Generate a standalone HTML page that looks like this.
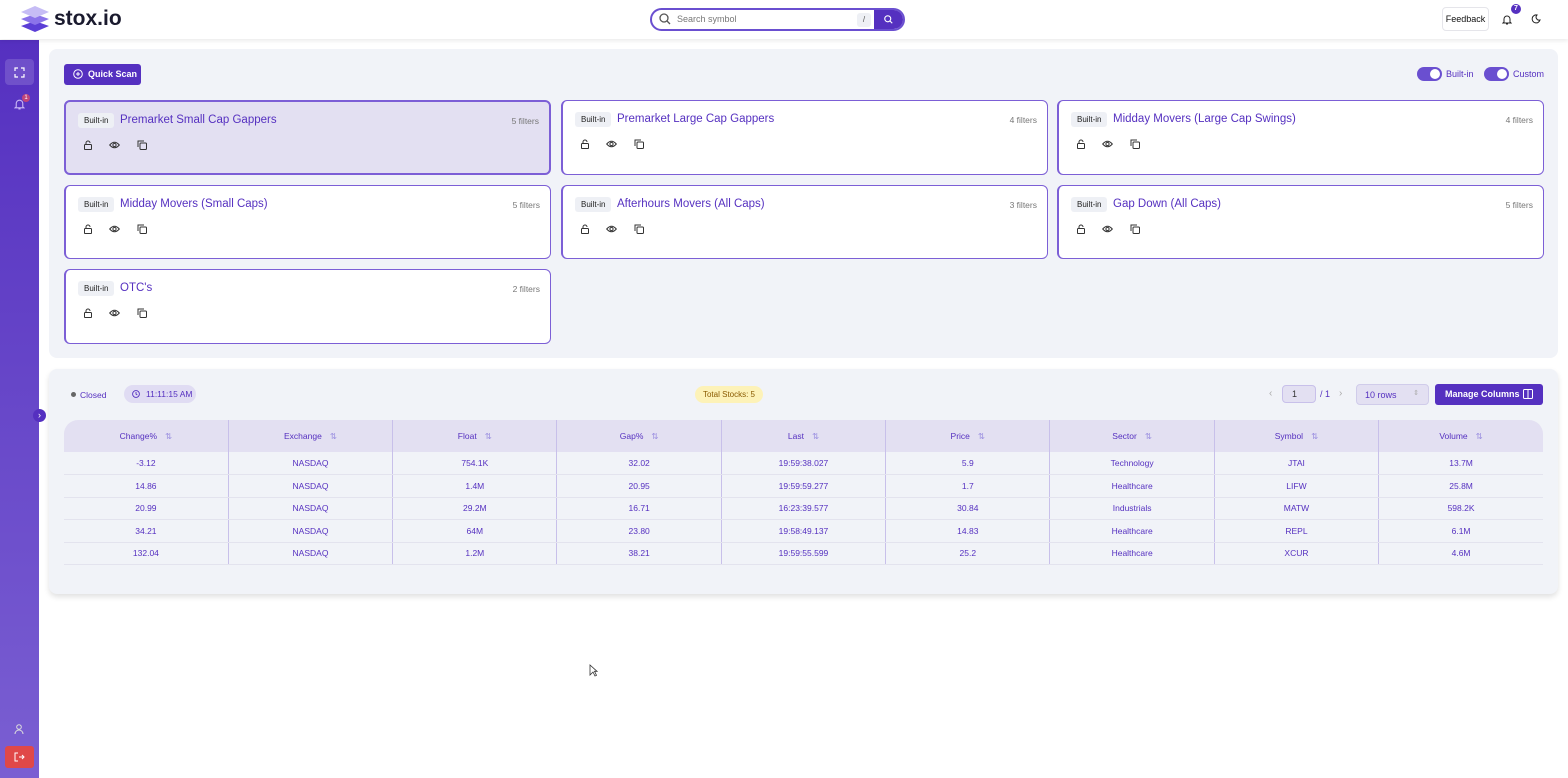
<!DOCTYPE html>
<html><head><meta charset="utf-8"><style>
*{box-sizing:border-box;margin:0;padding:0}
body{width:1568px;height:778px;overflow:hidden;background:#fff;font-family:"Liberation Sans",sans-serif;position:relative}
.top{position:absolute;left:0;top:0;width:1568px;height:39px;background:#fff;box-shadow:0 2px 4px rgba(0,0,0,.08);z-index:2}
.logo{position:absolute;left:20px;top:5px}
.logotext{position:absolute;left:54px;top:7px;font-size:21px;font-weight:bold;color:#1a1a2e}
.search{position:absolute;left:650px;top:8px;width:255px;height:23px;border:2px solid #6a4fd0;border-radius:12px;background:#fff;overflow:hidden}
.search span{position:absolute;left:25px;top:4px;font-size:9px;color:#777}
.search .k{position:absolute;left:205px;top:3px;width:14px;height:14px;background:#eef0f5;border-radius:3px;font-size:8px;color:#555;text-align:center;line-height:14px}
.search .b{position:absolute;right:0;top:0;width:29px;height:19px;background:#5530c0}
.fb{position:absolute;left:1442px;top:7px;width:47px;height:24px;border:1px solid #e5e5ea;border-radius:4px;font-size:9px;text-align:center;line-height:22px;color:#111}
.side{position:absolute;left:0;top:40px;width:39px;height:738px;background:linear-gradient(#5530c0,#7a5fd2)}
.p1{position:absolute;left:49px;top:49px;width:1509px;height:309px;background:#f1f3f8;border-radius:8px}
.p2{position:absolute;left:49px;top:369px;width:1509px;height:225px;background:#f1f3f8;border-radius:8px;box-shadow:0 3px 6px rgba(0,0,0,.12)}
.btn{position:absolute;background:#5530c0;color:#fff;font-size:9px;font-weight:bold;border-radius:3px}
.card{position:absolute;width:487px;height:75px;border:1px solid #7c5fd6;border-left-width:2px;border-radius:6px;background:#fff}
.card.sel{background:#e3e0f2;border-width:2px}
.tag{position:absolute;left:12px;top:11px;background:#eef0f5;font-size:8px;padding:3px 6px;border-radius:3px;color:#222}
.ttl{position:absolute;left:54px;top:12px;font-size:11.5px;color:#5530c0}
.flt{position:absolute;right:10px;top:14px;font-size:8.5px;color:#777}
.ic{position:absolute;top:38px}
.tgl{position:absolute;top:18px;width:25px;height:14px;border-radius:7px;background:#6a4fd0}
.tgl:after{content:"";position:absolute;right:2px;top:2px;width:10px;height:10px;border-radius:5px;background:#fff}
.tl{position:absolute;top:20px;font-size:9px;color:#5530c0}
table{position:absolute;left:64px;top:420px;width:1479px;border-collapse:collapse;font-size:8.5px;color:#5530c0;table-layout:fixed}
th{height:32px;background:#e3e0f2;font-weight:normal;border-right:1px solid #c8c0ea;font-size:8.5px}
th:last-child{border-right:none}
th:first-child{border-top-left-radius:14px}th:last-child{border-top-right-radius:14px}
th i{font-style:normal;color:#9a8ee0;margin-left:8px}
td{height:22.5px;text-align:center;border-right:1px solid #c8c0ea;border-bottom:1px solid #e3e3ee}
td:last-child{border-right:none}
</style></head><body>
<div class="top">
<svg class="logo" width="30" height="28" viewBox="0 0 30 28"><path d="M15 16 L29 21 L15 27 L1 21Z" fill="#5b3ed6"/><path d="M15 9 L29 14 L15 20 L1 14Z" fill="#8b73ea"/><path d="M15 1 L29 7 L15 13 L1 7Z" fill="#c6bcf5"/></svg>
<div class="logotext">stox.io</div>
<div class="search"><svg style="position:absolute;left:7px;top:3px" width="12" height="12" viewBox="0 0 12 12" fill="none" stroke="#555" stroke-width="1.3"><circle cx="5" cy="5" r="4"/><path d="M8 8l3 3"/></svg><span>Search symbol</span><div class="k">/</div><div class="b"><svg style="position:absolute;left:10px;top:5px" width="9" height="9" viewBox="0 0 12 12" fill="none" stroke="#fff" stroke-width="1.5"><circle cx="5" cy="5" r="4"/><path d="M8 8l3 3"/></svg></div></div>
<div class="fb">Feedback</div>
<svg style="position:absolute;left:1502px;top:14px" width="10" height="11" viewBox="0 0 10 11" fill="none" stroke="#222" stroke-width="1"><path d="M2 8V5a3 3 0 0 1 6 0v3l1 1H1z M4 10h2"/></svg>
<div style="position:absolute;left:1511px;top:4px;width:10px;height:10px;border-radius:5px;background:#5530c0;color:#fff;font-size:7px;text-align:center;line-height:10px;font-weight:bold">7</div>
<svg style="position:absolute;left:1531px;top:14px" width="10" height="10" viewBox="0 0 10 10" fill="none" stroke="#222" stroke-width="1"><path d="M6 1a4 4 0 1 0 3 5a3 3 0 0 1-3-5z"/></svg>
</div>
<div class="side">
<div style="position:absolute;left:5px;top:19px;width:29px;height:26px;background:rgba(255,255,255,.15);border-radius:4px"></div>
<svg style="position:absolute;left:14px;top:27px" width="11" height="11" viewBox="0 0 11 11" fill="none" stroke="#fff" stroke-width="1.2"><path d="M1 4V1h3M7 1h3v3M10 7v3H7M4 10H1V7"/></svg>
<svg style="position:absolute;left:14px;top:58px" width="11" height="12" viewBox="0 0 10 11" fill="none" stroke="#c9b8f5" stroke-width="1"><path d="M2 8V5a3 3 0 0 1 6 0v3l1 1H1z M4 10h2"/></svg>
<div style="position:absolute;left:22px;top:54px;width:8px;height:8px;border-radius:4px;background:#c0457a;color:#fff;font-size:6px;text-align:center;line-height:8px">1</div>
<div style="position:absolute;left:33px;top:369px;width:13px;height:13px;border-radius:7px;background:#5530c0;color:#fff;font-size:9px;text-align:center;line-height:12px;z-index:3">›</div>
<svg style="position:absolute;left:14px;top:684px" width="10" height="11" viewBox="0 0 10 11" fill="none" stroke="#ddd" stroke-width="1"><circle cx="5" cy="3" r="2.3"/><path d="M1 10a4 4 0 0 1 8 0"/></svg>
<div style="position:absolute;left:5px;top:706px;width:29px;height:22px;background:#e04848;border-radius:3px"></div>
<svg style="position:absolute;left:14px;top:712px" width="11" height="10" viewBox="0 0 11 10" fill="none" stroke="#fff" stroke-width="1"><path d="M4 1H1v8h3M5 5h5M8 3l2 2-2 2"/></svg>
</div>
<div class="p1">
<div class="btn" style="left:15px;top:15px;width:77px;height:21px"><svg style="position:absolute;left:9px;top:5px" width="10" height="10" viewBox="0 0 10 10" fill="none" stroke="#fff" stroke-width="1"><circle cx="5" cy="5" r="4.3"/><path d="M5 3v4M3 5h4"/></svg><span style="position:absolute;left:24px;top:5px">Quick Scan</span></div>
<div class="tgl" style="left:1368px"></div><div class="tl" style="left:1397px">Built-in</div>
<div class="tgl" style="left:1435px"></div><div class="tl" style="left:1464px">Custom</div>
</div>
<div id="cards"></div>
<div class="p2">
<div style="position:absolute;left:22px;top:23px;width:5px;height:5px;border-radius:3px;background:#666"></div>
<div style="position:absolute;left:31px;top:21px;font-size:8.5px;color:#5530c0">Closed</div>
<div style="position:absolute;left:75px;top:16px;width:72px;height:18px;border-radius:9px;background:#e0dcf3;font-size:8.5px;color:#5530c0;line-height:18px;padding-left:22px">11:11:15 AM<svg style="position:absolute;left:8px;top:5px" width="8" height="8" viewBox="0 0 8 8" fill="none" stroke="#5530c0" stroke-width=".9"><circle cx="4" cy="4" r="3.4"/><path d="M4 2v2l1.3 1"/></svg></div>
<div style="position:absolute;left:646px;top:17px;width:68px;height:17px;border-radius:9px;background:#fdf2b8;font-size:8px;color:#8a5a00;text-align:center;line-height:17px">Total Stocks: 5</div>
<div style="position:absolute;left:1220px;top:19px;font-size:10px;color:#aaa">‹</div>
<div style="position:absolute;left:1233px;top:16px;width:34px;height:18px;border:1px solid #c8c0ea;border-radius:4px;background:#e3e0f2;font-size:9px;color:#333;padding:3px 9px">1</div>
<div style="position:absolute;left:1271px;top:20px;font-size:9px;color:#5530c0">/ 1</div>
<div style="position:absolute;left:1290px;top:19px;font-size:10px;color:#aaa">›</div>
<div style="position:absolute;left:1307px;top:15px;width:73px;height:21px;border:1px solid #d0ccea;border-radius:4px;background:#e3e0f2;font-size:9px;color:#5530c0;padding:5px 8px">10 rows<span style="position:absolute;right:9px;top:4px;font-size:7px;color:#aaa">⇕</span></div>
<div class="btn" style="left:1386px;top:15px;width:108px;height:21px"><span style="position:absolute;left:10px;top:5px">Manage Columns</span><svg style="position:absolute;left:88px;top:5px" width="10" height="10" viewBox="0 0 10 10" fill="none" stroke="#fff" stroke-width="1"><rect x=".5" y=".5" width="9" height="9" rx="1"/><path d="M5 1v8"/></svg></div>
</div>
<table>
<tr><th>Change%<i>⇅</i></th><th>Exchange<i>⇅</i></th><th>Float<i>⇅</i></th><th>Gap%<i>⇅</i></th><th>Last<i>⇅</i></th><th>Price<i>⇅</i></th><th>Sector<i>⇅</i></th><th>Symbol<i>⇅</i></th><th>Volume<i>⇅</i></th></tr>
<tr><td>-3.12</td><td>NASDAQ</td><td>754.1K</td><td>32.02</td><td>19:59:38.027</td><td>5.9</td><td>Technology</td><td>JTAI</td><td>13.7M</td></tr>
<tr><td>14.86</td><td>NASDAQ</td><td>1.4M</td><td>20.95</td><td>19:59:59.277</td><td>1.7</td><td>Healthcare</td><td>LIFW</td><td>25.8M</td></tr>
<tr><td>20.99</td><td>NASDAQ</td><td>29.2M</td><td>16.71</td><td>16:23:39.577</td><td>30.84</td><td>Industrials</td><td>MATW</td><td>598.2K</td></tr>
<tr><td>34.21</td><td>NASDAQ</td><td>64M</td><td>23.80</td><td>19:58:49.137</td><td>14.83</td><td>Healthcare</td><td>REPL</td><td>6.1M</td></tr>
<tr><td>132.04</td><td>NASDAQ</td><td>1.2M</td><td>38.21</td><td>19:59:55.599</td><td>25.2</td><td>Healthcare</td><td>XCUR</td><td>4.6M</td></tr>
</table>
<script>
var d=[["Premarket Small Cap Gappers","5",64,100,1],["Premarket Large Cap Gappers","4",561,100],["Midday Movers (Large Cap Swings)","4",1057,100],["Midday Movers (Small Caps)","5",64,185],["Afterhours Movers (All Caps)","3",561,185],["Gap Down (All Caps)","5",1057,185],["OTC's","2",64,269]];
var ic='<svg class="ic" style="left:17px" width="10" height="10" viewBox="0 0 10 10" fill="none" stroke="#333" stroke-width="1"><rect x="1.5" y="4.5" width="7" height="5" rx=".8"/><path d="M3 4.5V3a2 2 0 0 1 4 0"/></svg><svg class="ic" style="left:43px" width="11" height="10" viewBox="0 0 11 10" fill="none" stroke="#333" stroke-width="1"><path d="M.7 5Q5.5-.5 10.3 5Q5.5 10.5.7 5z"/><circle cx="5.5" cy="5" r="1.6"/></svg><svg class="ic" style="left:71px" width="10" height="10" viewBox="0 0 10 10" fill="none" stroke="#333" stroke-width="1"><rect x="3" y="3" width="6.5" height="6.5" rx="1"/><path d="M1 7V1h6"/></svg>';
var h='';d.forEach(function(c){h+='<div class="card'+(c[4]?' sel':'')+'" style="left:'+c[2]+'px;top:'+c[3]+'px;'+(c[3]==185?'height:74px':'')+'"><div class="tag">Built-in</div><div class="ttl">'+c[0]+'</div><div class="flt">'+c[1]+' filters</div>'+ic+'</div>'});
document.getElementById('cards').innerHTML=h;
</script>
<svg style="position:absolute;left:589px;top:664px" width="9" height="13" viewBox="0 0 9 13"><path d="M1 1v10l3-3 2 4 1.5-.7-2-4H8z" fill="#fff" stroke="#333" stroke-width=".8"/></svg>
</body></html>
